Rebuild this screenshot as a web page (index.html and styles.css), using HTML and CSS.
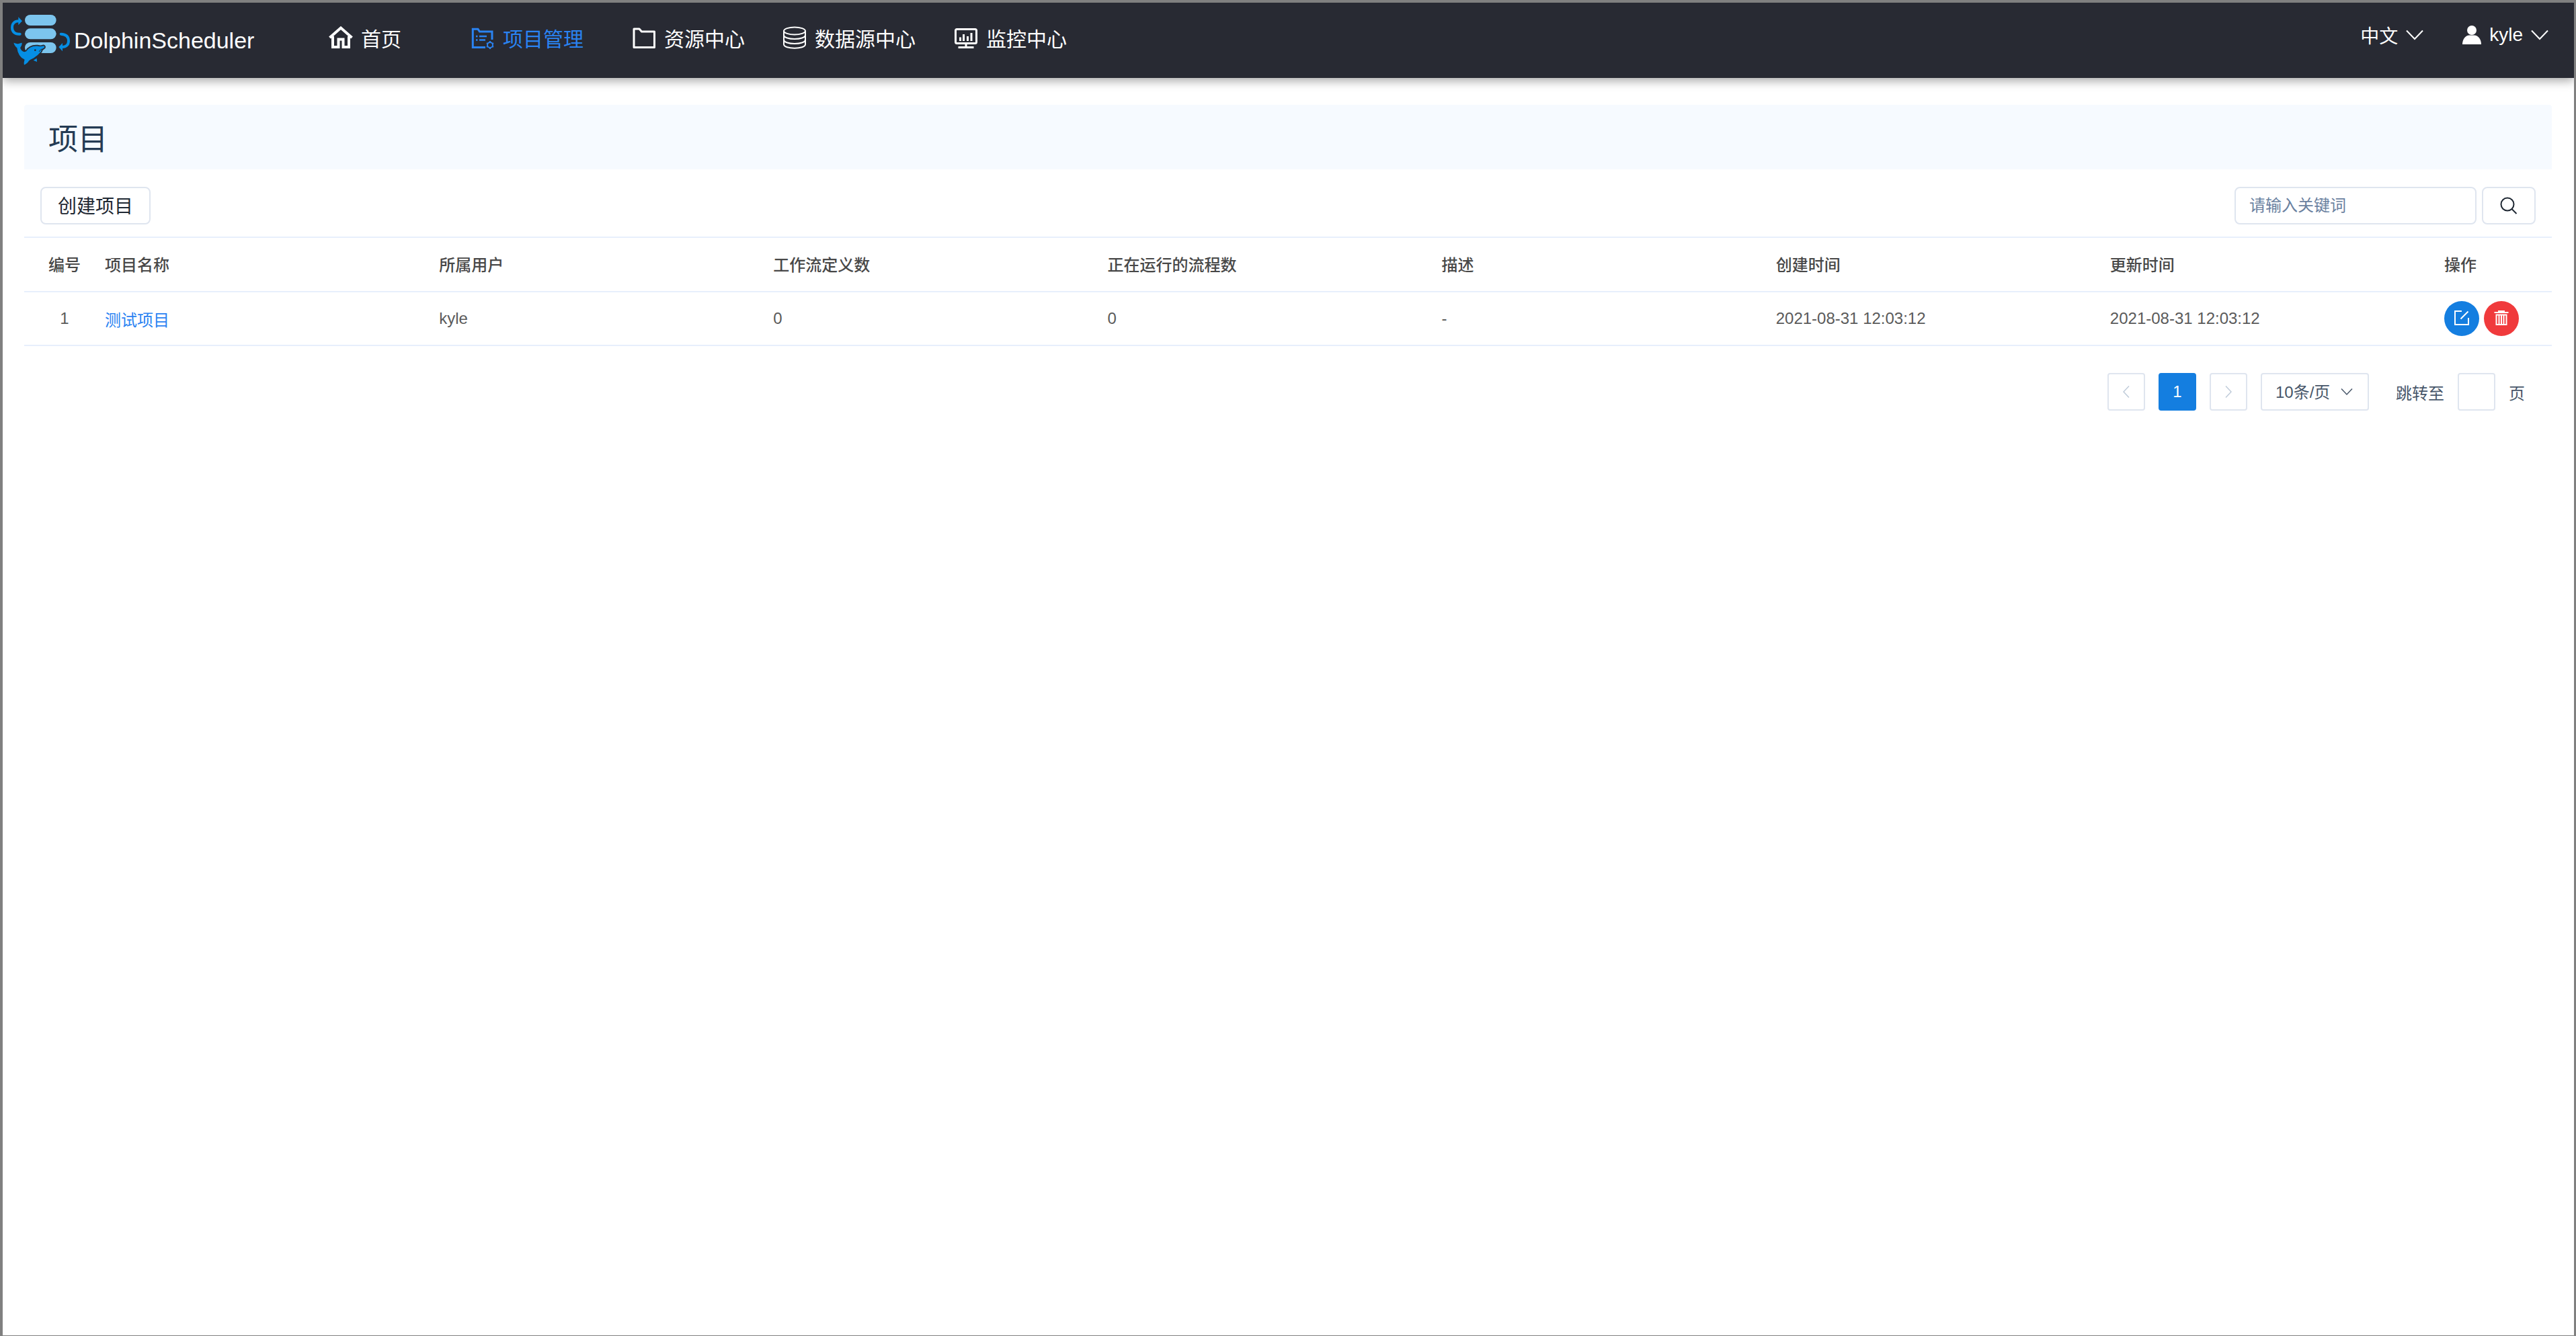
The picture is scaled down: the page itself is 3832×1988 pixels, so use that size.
FILE: index.html
```html
<!DOCTYPE html>
<html lang="zh-CN">
<head>
  <meta charset="UTF-8" />
  <meta name="viewport" content="width=device-width, initial-scale=1.0"/>
  <title>DolphinScheduler</title>
  <link rel="stylesheet" href="styles.css">
</head>
<body>
  <div class="app">
    <header class="header">
      <a class="logo" href="#">
        <svg class="logo-mark" viewBox="45 60 270 240" aria-hidden="true">
          <g fill="#7cc5ee">
            <rect x="111" y="66" width="140" height="48" rx="24"/>
            <rect x="111" y="127" width="140" height="48" rx="24"/>
            <rect x="111" y="189" width="140" height="48" rx="24"/>
          </g>
          <g fill="none" stroke="#058ee4" stroke-width="12" stroke-linecap="round">
            <path d="M89 152C65 154 54 140 54 123C54 105 65 94 84 94"/>
            <path d="M272 152C295 153 306 165 306 183C306 200 295 210 277 210"/>
          </g>
          <path fill="#058ee4" d="M82 76L99 94L82 112ZM279 192L262 210L279 229Z"/>
          <path fill="#058ee4" stroke="#282a33" stroke-width="5" stroke-linejoin="round" d="M58 187Q72 194 80 193L101 187Q102 202 93 214C98 227 108 232 116 227C127 209 146 201 168 203Q185 207 194 202Q204 205 200 214Q187 222 185 232Q172 248 152 261Q136 268 130 274Q122 287 105 293Q103 278 107 267C90 260 76 240 74 216Q60 204 58 187Z"/>
          <path fill="#058ee4" d="M164 260L165 276L149 269Z"/>
          <path fill="none" stroke="#282a33" stroke-width="3" d="M174 231Q180 220 190 218"/>
          <circle cx="157" cy="224" r="4" fill="#282a33"/>
        </svg>
        <span>DolphinScheduler</span>
      </a>
      <nav class="nav">
        <a href="#">
          <svg class="icon" viewBox="0 0 38 34" aria-hidden="true">
            <path fill="none" stroke="currentColor" stroke-width="4" d="M2.500 17L19 2.500L35.500 17M7 15V31H15.500V19.500H22.500V31H31V15"/>
          </svg>
          首页
        </a>
        <a class="active" href="#">
          <svg class="icon" viewBox="0 0 34 34" aria-hidden="true">
            <path fill="none" stroke="currentColor" stroke-width="3" d="M21 31.500H2.300V4.300H10L12.500 8H31V20"/>
            <path fill="none" stroke="currentColor" stroke-width="2.400" d="M7 15H9.500M12 15H23M7 20.500H9.500M12 20.500H21"/>
            <circle cx="28" cy="28" r="4" fill="none" stroke="currentColor" stroke-width="2"/>
            <path stroke="currentColor" stroke-width="2" d="M28 22V24M28 32V34M23 25L24.500 26M31.500 30L33 31M33 25L31.500 26M24.500 30L23 31"/>
          </svg>
          项目管理
        </a>
        <a href="#">
          <svg class="icon" viewBox="0 0 34 34" aria-hidden="true">
            <path fill="none" stroke="currentColor" stroke-width="3" stroke-linejoin="round" d="M2 31.500V4H10L13.500 8H32.500V31.500Z"/>
          </svg>
          资源中心
        </a>
        <a href="#">
          <svg class="icon" viewBox="0 0 36 34" aria-hidden="true">
            <g fill="none" stroke="currentColor" stroke-width="2">
              <ellipse cx="18" cy="7" rx="16" ry="5.500"/>
              <path d="M2 7V27C2 34.500 34 34.500 34 27V7M2 13C2 21 34 21 34 13M2 20C2 28 34 28 34 20"/>
            </g>
          </svg>
          数据源中心
        </a>
        <a href="#">
          <svg class="icon" viewBox="0 0 36 34" aria-hidden="true">
            <rect x="2.500" y="4.500" width="31" height="21" rx="2" fill="none" stroke="currentColor" stroke-width="3"/>
            <path stroke="currentColor" stroke-width="3" d="M9.500 22V16.500M14.500 22V12M20.500 22V15M26 22V10M18 26V31M6.500 31.500H29.500"/>
          </svg>
          监控中心
        </a>
      </nav>
      <div class="user-nav">
        <button type="button">
          中文
          <svg class="arrow" viewBox="0 0 26 16" aria-hidden="true"><path fill="none" stroke="currentColor" stroke-width="2" d="M1 1.500L13 14L25 1.500"/></svg>
        </button>
        <button type="button">
          <svg class="avatar" viewBox="0 0 28 28" aria-hidden="true"><circle cx="14" cy="7" r="7" fill="currentColor"/><path fill="currentColor" d="M0 28C0 20 5 14.500 10 14.500H18C23 14.500 28 20 28 28Z"/></svg>
          kyle
          <svg class="arrow" viewBox="0 0 26 16" aria-hidden="true"><path fill="none" stroke="currentColor" stroke-width="2" d="M1 1.500L13 14L25 1.500"/></svg>
        </button>
      </div>
    </header>

    <main class="main">
      <h1 class="title">项目</h1>
      <div class="toolbar">
        <button class="btn" type="button">创建项目</button>
        <form class="search">
          <input type="text" placeholder="请输入关键词" aria-label="请输入关键词">
          <button class="btn btn-search" type="button" aria-label="搜索">
            <svg viewBox="0 0 26 26" aria-hidden="true"><g fill="none" stroke="currentColor" stroke-width="2"><circle cx="11" cy="11" r="9.500"/><path d="M17.500 18L24.500 25"/></g></svg>
          </button>
        </form>
      </div>

      <table class="table">
        <thead>
          <tr>
            <th class="col-no">编号</th>
            <th>项目名称</th>
            <th>所属用户</th>
            <th>工作流定义数</th>
            <th>正在运行的流程数</th>
            <th>描述</th>
            <th>创建时间</th>
            <th>更新时间</th>
            <th class="col-action">操作</th>
          </tr>
        </thead>
        <tbody>
          <tr>
            <td class="col-no">1</td>
            <td><a href="#">测试项目</a></td>
            <td>kyle</td>
            <td>0</td>
            <td>0</td>
            <td>-</td>
            <td>2021-08-31 12:03:12</td>
            <td>2021-08-31 12:03:12</td>
            <td>
              <div class="actions">
                <button class="edit" type="button" aria-label="编辑">
                  <svg viewBox="0 0 22 22" aria-hidden="true"><path fill="none" stroke="currentColor" stroke-width="2" d="M11 1H1V21H21V11M9.500 12.500L20.500 1.500"/></svg>
                </button>
                <button class="delete" type="button" aria-label="删除">
                  <svg viewBox="0 0 22 22" aria-hidden="true"><path fill="none" stroke="currentColor" stroke-width="2" d="M0.500 3H21.500M6 1H16M3.500 6.500H18.500V21H3.500ZM7.500 7V21M11 7V21M14.500 7V21"/></svg>
                </button>
              </div>
            </td>
          </tr>
        </tbody>
      </table>

      <div class="pagination">
        <button class="page" type="button" disabled aria-label="上一页">
          <svg viewBox="0 0 10 18" aria-hidden="true"><path fill="none" stroke="currentColor" stroke-width="1.500" d="M9 0.500L1 9L9 17.500"/></svg>
        </button>
        <button class="page current" type="button">1</button>
        <button class="page" type="button" disabled aria-label="下一页">
          <svg viewBox="0 0 10 18" aria-hidden="true"><path fill="none" stroke="currentColor" stroke-width="1.500" d="M1 0.500L9 9L1 17.500"/></svg>
        </button>
        <div class="page-size">
          <select aria-label="每页条数">
            <option>10条/页</option>
            <option>30条/页</option>
            <option>50条/页</option>
          </select>
          <svg viewBox="0 0 18 12" aria-hidden="true"><path fill="none" stroke="currentColor" stroke-width="1.500" d="M1 1.500L9 10L17 1.500"/></svg>
        </div>
        <label class="jump" for="jump-page">跳转至</label>
        <input class="page" id="jump-page" type="text">
        <span>页</span>
      </div>
    </main>
  </div>
</body>
</html>
```
FILE: styles.css
```css
:root {
  --dark: #282a33;
  --link: #2a83f2;
  --primary: #147ee0;
  --danger: #f03a3c;
  --border: #dfe5ef;
  --line: #e7effc;
  --text: #5a5a5a;
}
* {
  box-sizing: border-box;
}
body {
  margin: 0;
  font-family: "Liberation Sans", "Noto Sans CJK SC", sans-serif;
  font-size: 24px;
  color: var(--text);
  background: #fff;
}
button, input, select {
  font: inherit;
  color: inherit;
}
button {
  cursor: pointer;
}
a {
  color: var(--link);
  text-decoration: none;
}
svg {
  display: block;
  flex: none;
}
.app {
  min-height: 100vh;
  border: solid #808080;
  border-width: 4px 3px 1px 4px;
  overflow: hidden;
}

/* header */
.header {
  display: flex;
  height: 112px;
  padding: 0 38px 0 11px;
  background: var(--dark);
  color: #fff;
  box-shadow: 0 4px 14px rgba(0, 0, 0, 0.36);
}
.logo {
  display: flex;
  align-items: center;
  gap: 5px;
  width: 473px;
  color: #fff;
  font-size: 34px;
}
.logo-mark {
  width: 90px;
  height: 80px;
}
.nav {
  display: grid;
  grid-template-columns: 211px 240px 224px 255px auto;
  padding-bottom: 8px;
  font-size: 30px;
}
.nav a {
  display: flex;
  align-items: center;
  gap: 11px;
  color: #fff;
}
.nav a.active {
  color: var(--link);
}
.icon {
  width: 38px;
  height: 34px;
}
.user-nav {
  display: flex;
  gap: 58px;
  height: 96px;
  margin-left: auto;
}
.user-nav button {
  display: flex;
  align-items: center;
  gap: 12px;
  padding: 0;
  border: none;
  background: none;
  font-size: 28px;
}
.arrow {
  width: 26px;
  height: 16px;
}
.avatar {
  width: 28px;
  height: 28px;
}

/* content */
.main {
  padding: 40px 33px 40px 32px;
}
.title {
  margin: 0;
  padding: 8px 36px 0;
  border-radius: 4px 4px 0 0;
  background: #f6faff;
  color: #253b54;
  font-size: 44px;
  font-weight: 400;
  line-height: 88px;
}
.toolbar {
  display: flex;
  justify-content: space-between;
  padding: 26px 24px 18px;
}
.search {
  display: flex;
  gap: 8px;
}
.btn, .search input {
  height: 56px;
  border: 2px solid var(--border);
  border-radius: 8px;
  background: #fff;
}
.btn {
  padding: 0 24px 2px;
  color: #1f2833;
  font-size: 28px;
}
.btn-search {
  width: 80px;
  padding: 0 25px;
}
.btn-search svg {
  width: 26px;
  height: 26px;
}
.search input {
  width: 360px;
  padding: 0 20px;
}
.search input::placeholder {
  color: #6a819f;
}

/* project table */
.table {
  width: 100%;
  table-layout: fixed;
  border-collapse: separate;
  border-spacing: 0;
  border-top: 2px solid var(--line);
}
.table th, .table td {
  height: 80px;
  padding: 0;
  border-bottom: 2px solid var(--line);
  text-align: left;
}
.table th {
  height: 81px;
  padding-bottom: 2px;
  color: #484848;
  font-weight: 500;
}
.table .col-no {
  width: 120px;
  text-align: center;
}
.col-action {
  width: 160px;
}
.actions {
  display: flex;
  gap: 7px;
}
.actions button {
  display: flex;
  align-items: center;
  justify-content: center;
  width: 52px;
  height: 52px;
  padding: 0 0 2px;
  border: none;
  border-radius: 50%;
  color: #fff;
}
.actions svg {
  width: 22px;
  height: 22px;
}
.edit {
  background: var(--primary);
}
.delete {
  background: var(--danger);
}

/* pagination */
.pagination {
  display: flex;
  align-items: center;
  justify-content: flex-end;
  gap: 20px;
  padding: 40px 40px 0;
  color: #475669;
}
.page {
  display: flex;
  align-items: center;
  justify-content: center;
  width: 56px;
  height: 56px;
  padding: 0;
  border: 2px solid var(--border);
  border-radius: 4px;
  background: #fff;
}
.page:disabled {
  color: #bfcbd9;
}
.page.current {
  border-color: var(--primary);
  background: var(--primary);
  color: #fff;
}
.page svg {
  width: 10px;
  height: 18px;
}
.page-size {
  position: relative;
}
.page-size select {
  display: block;
  width: 161px;
  height: 56px;
  padding: 0 20px;
  border: 2px solid var(--border);
  border-radius: 4px;
  background: #fff;
  appearance: none;
}
.page-size svg {
  position: absolute;
  top: 22px;
  right: 24px;
  width: 18px;
  height: 12px;
  pointer-events: none;
}
.jump {
  margin-left: 20px;
}
```
